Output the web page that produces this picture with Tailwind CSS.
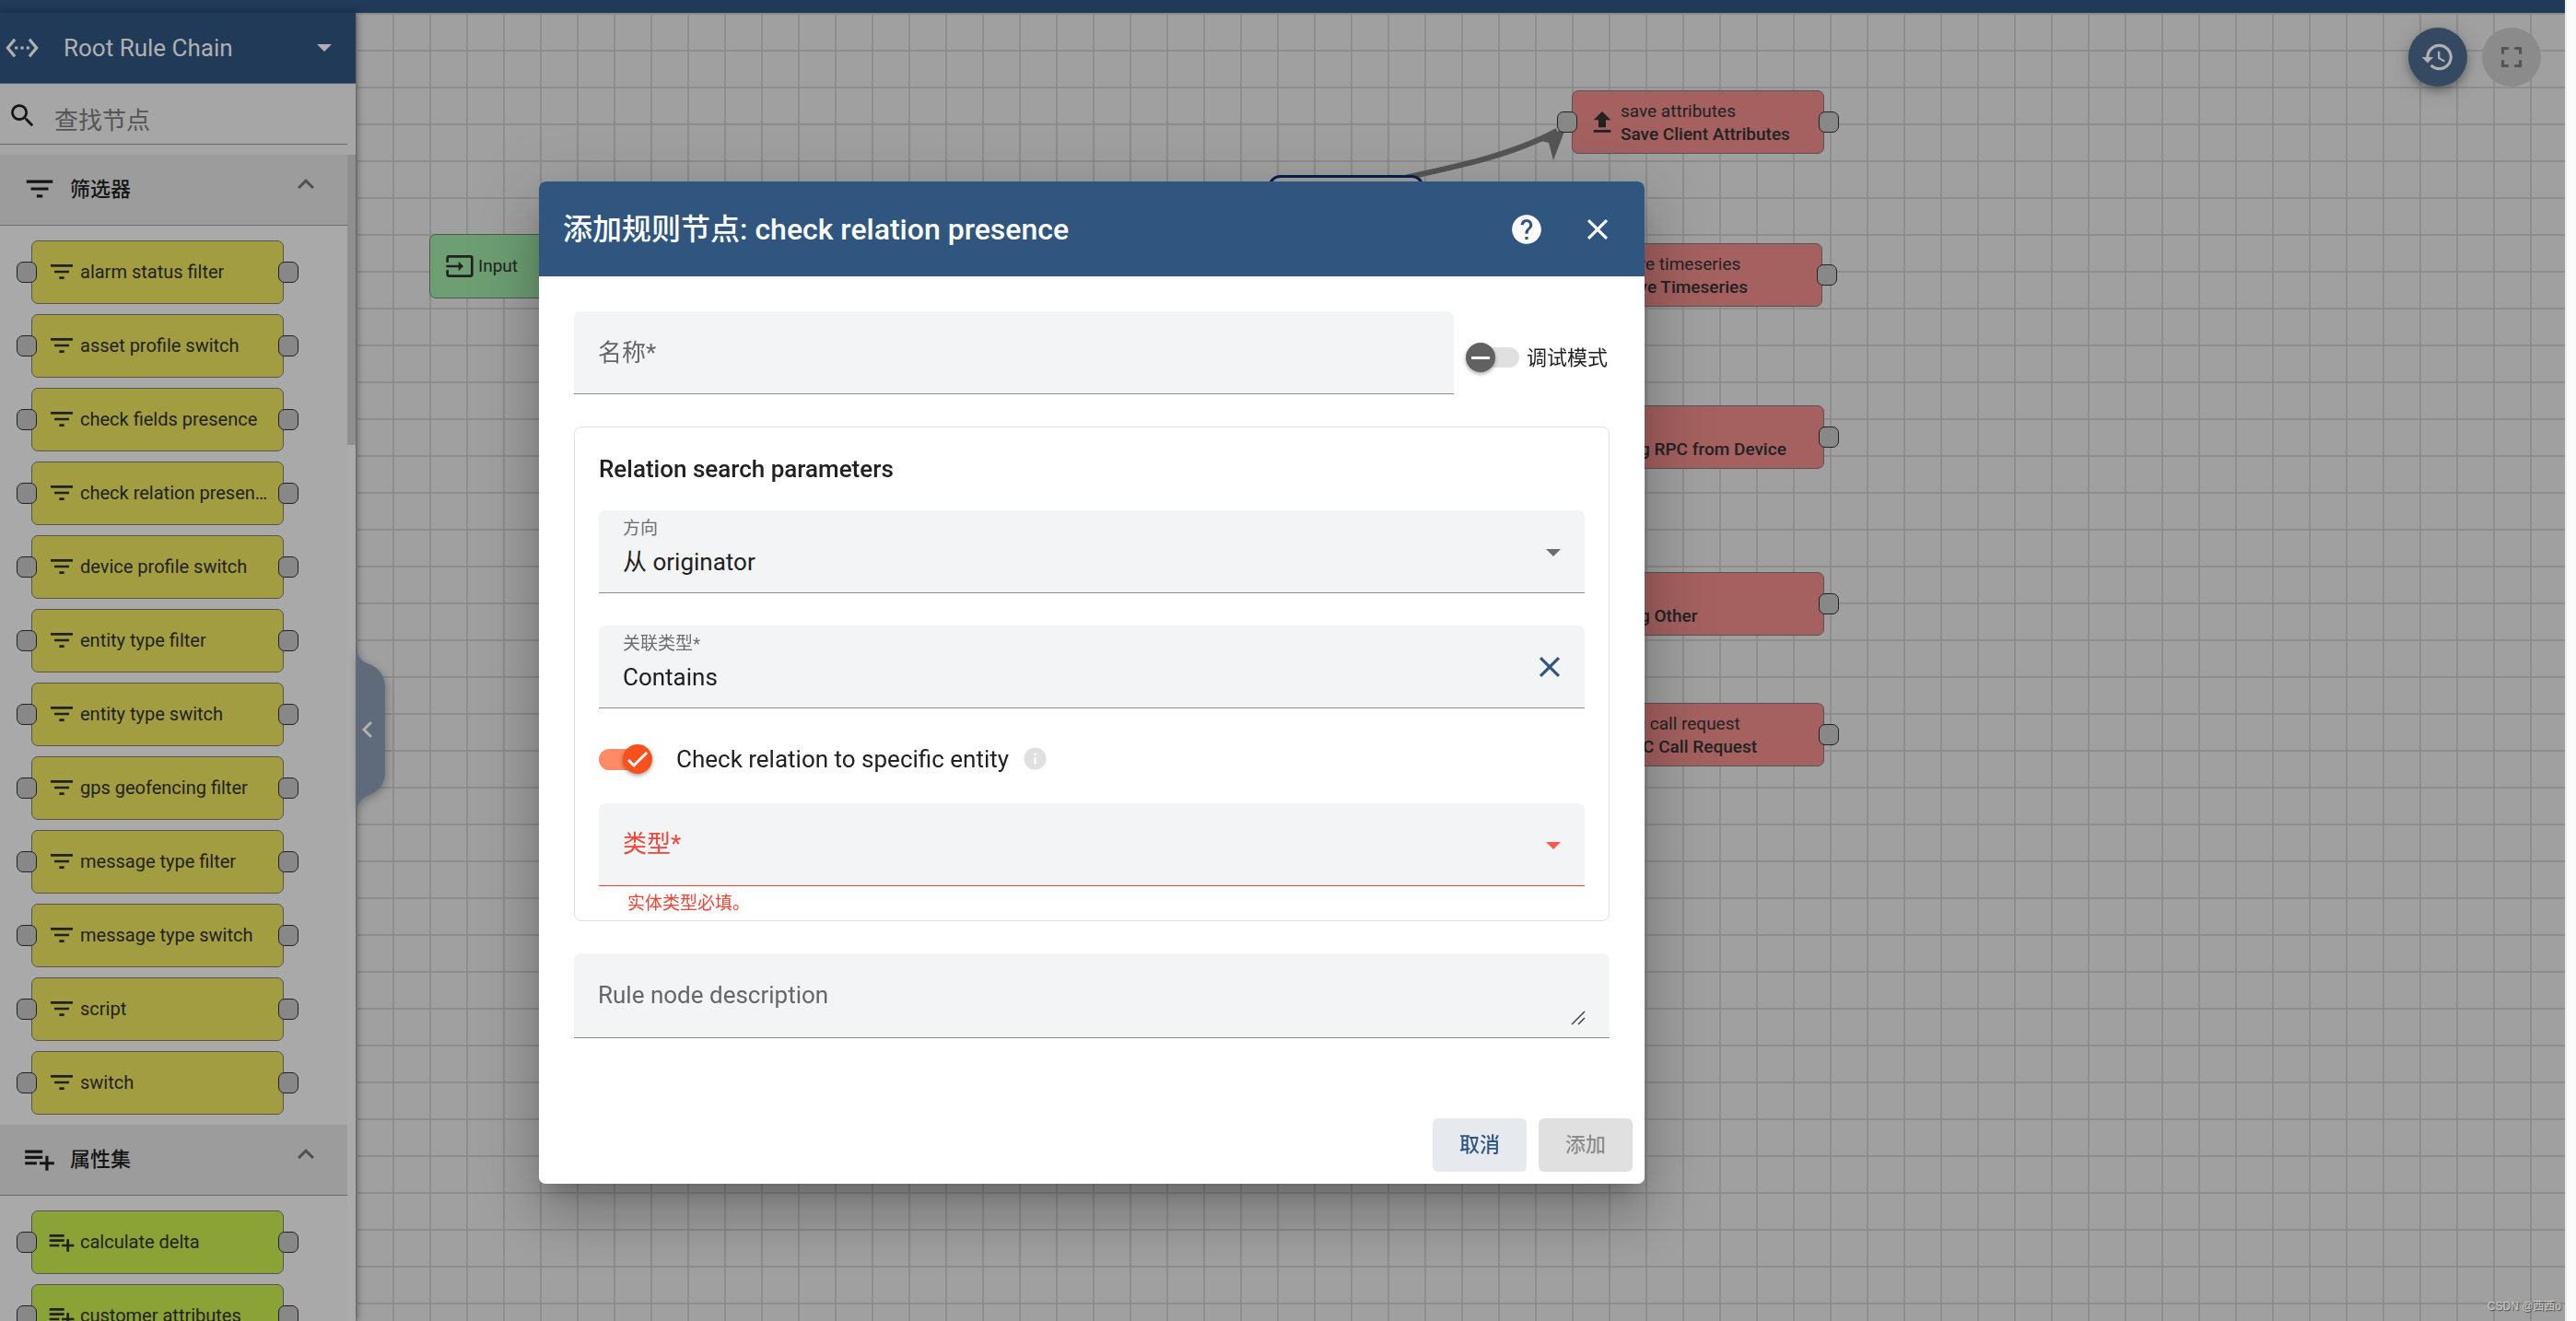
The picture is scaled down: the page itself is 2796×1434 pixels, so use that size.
<!DOCTYPE html>
<html lang="zh-CN">
<head>
    <meta charset="UTF-8">
    <meta name="viewport" content="width=device-width, initial-scale=1.0">
    <title>Root Rule Chain</title>
    <script src="https://cdn.jsdelivr.net/npm/@tailwindcss/browser@4"></script>
</head>
<body class="h-screen overflow-hidden bg-[#fafafa] pr-[10px] font-[Roboto,'Noto_Sans_CJK_SC',sans-serif] text-[#212121]">
    <!-- Icon set -->
    <svg class="hidden">
        <symbol id="i-chain" viewBox="0 0 24 24"><path d="M7.77 6.76L6.23 5.48.82 12l5.41 6.52 1.54-1.28L3.42 12l4.35-5.24zM7 13h2v-2H7v2zm10-2h-2v2h2v-2zm-6 2h2v-2h-2v2zm6.77-7.52l-1.54 1.28L20.58 12l-4.35 5.24 1.54 1.28L23.18 12l-5.41-6.52z"/></symbol>
        <symbol id="i-search" viewBox="0 0 24 24"><path d="M15.5 14h-.79l-.28-.27C15.41 12.59 16 11.11 16 9.5 16 5.91 13.09 3 9.5 3S3 5.91 3 9.5 5.91 16 9.5 16c1.61 0 3.09-.59 4.23-1.57l.27.28v.79l5 4.99L20.49 19l-4.99-5zm-6 0C7.01 14 5 11.99 5 9.5S7.01 5 9.5 5 14 7.01 14 9.5 11.99 14 9.5 14z"/></symbol>
        <symbol id="i-filter" viewBox="0 0 24 24"><path d="M10 18h4v-2h-4v2zM3 6v2h18V6H3zm3 7h12v-2H6v2z"/></symbol>
        <symbol id="i-playlist" viewBox="0 0 24 24"><path d="M14 10H2v2h12v-2zm0-4H2v2h12V6zm4 8v-4h-2v4h-4v2h4v4h2v-4h4v-2h-4zM2 16h8v-2H2v2z"/></symbol>
        <symbol id="i-up" viewBox="0 0 24 24"><path d="M12 8l-6 6 1.41 1.41L12 10.83l4.59 4.58L18 14z"/></symbol>
        <symbol id="i-input" viewBox="0 0 24 24"><path d="M21 3.01H3c-1.1 0-2 .9-2 2V9h2V4.99h18v14.03H3V15H1v4.01c0 1.1.9 1.98 2 1.98h18c1.1 0 2-.88 2-1.98v-14c0-1.11-.9-2-2-2zM11 16l4-4-4-4v3H1v2h10v3z"/></symbol>
        <symbol id="i-upload" viewBox="0 0 24 24"><path d="M5 20h14v-2H5v2zM5 10h4v6h6v-6h4l-7-7-7 7z"/></symbol>
        <symbol id="i-history" viewBox="0 0 24 24"><path d="M13 3c-4.97 0-9 4.03-9 9H1l3.89 3.89.07.14L9 12H6c0-3.87 3.13-7 7-7s7 3.13 7 7-3.13 7-7 7c-1.93 0-3.68-.79-4.94-2.06l-1.42 1.42C8.27 19.99 10.51 21 13 21c4.97 0 9-4.03 9-9s-4.03-9-9-9zm-1 5v5l4.28 2.54.72-1.21-3.5-2.08V8H12z"/></symbol>
        <symbol id="i-full" viewBox="0 0 24 24"><path d="M7 14H5v5h5v-2H7v-3zm-2-4h2V7h3V5H5v5zm12 7h-3v2h5v-5h-2v3zM14 5v2h3v3h2V5h-5z"/></symbol>
        <symbol id="i-help" viewBox="0 0 24 24"><path d="M12 2C6.48 2 2 6.48 2 12s4.48 10 10 10 10-4.48 10-10S17.52 2 12 2zm1 17h-2v-2h2v2zm2.07-7.75l-.9.92C13.45 12.9 13 13.5 13 15h-2v-.5c0-1.1.45-2.1 1.17-2.83l1.24-1.26c.37-.36.59-.86.59-1.41 0-1.1-.9-2-2-2s-2 .9-2 2H8c0-2.21 1.79-4 4-4s4 1.79 4 4c0 .88-.36 1.68-.93 2.25z"/></symbol>
        <symbol id="i-close" viewBox="0 0 24 24"><path d="M19 6.41L17.59 5 12 10.59 6.41 5 5 6.41 10.59 12 5 17.59 6.41 19 12 13.41 17.59 19 19 17.59 13.41 12z"/></symbol>
        <symbol id="i-info" viewBox="0 0 24 24"><path d="M12 2C6.48 2 2 6.48 2 12s4.48 10 10 10 10-4.48 10-10S17.52 2 12 2zm1 15h-2v-6h2v6zm0-8h-2V7h2v2z"/></symbol>
    </svg>

    <div class="flex h-full flex-col border-r-2 border-[#ebebeb]">
        <div class="h-[14px] shrink-0 bg-[#213a58]"></div>
        <div class="flex min-h-0 flex-1">
            <!-- Node library -->
            <aside class="relative z-10 flex w-[386px] shrink-0 flex-col bg-[#a6a6a6] shadow-[2px_0_8px_rgba(0,0,0,0.35)]">
                <button class="flex h-[77px] shrink-0 items-center border-b border-[#4e627c] bg-[#213a58] pr-[26px] pl-[5px] text-[#b0b0b0]">
                    <svg class="size-[38px] fill-current"><use href="#i-chain"/></svg>
                    <span class="ml-[26px] flex-1 text-left text-[26px]">Root Rule Chain</span>
                    <svg class="h-2 w-4 fill-current" viewBox="0 0 16 8"><path d="M0 0h16L8 8z"/></svg>
                </button>
                <div class="mr-[9px] flex h-[66px] shrink-0 items-center border-b border-[#666] pt-[4px] pl-[8px]">
                    <svg class="size-[33px] fill-[#151515]"><use href="#i-search"/></svg>
                    <input type="text" aria-label="查找节点" placeholder="查找节点" class="ml-[18px] min-w-0 flex-1 pt-[12px] text-[26px] placeholder:text-[#555] focus:outline-none">
                </div>
                <div class="mt-[11px] flex min-h-0 flex-1">
                    <div class="min-w-0 flex-1 overflow-hidden bg-[#a9a9a9]">
                        <section>
                            <button class="flex h-[77px] w-full items-center border-b border-[#6a6a6a] bg-[#9c9c9c] pr-[27px] pb-[2px] pl-[24px]">
                                <svg class="size-[38px] fill-[#151515]"><use href="#i-filter"/></svg>
                                <span class="ml-[14px] flex-1 text-left text-[22px] font-medium text-[#151515]">筛选器</span>
                                <svg class="mb-[10px] size-[36px] fill-[#505050]"><use href="#i-up"/></svg>
                            </button>
                            <div id="filterNodes" class="flex flex-col gap-[11px] pt-[16px] pb-[11px]"></div>
                        </section>
                        <section>
                            <button class="flex h-[77px] w-full items-center border-b border-[#6a6a6a] bg-[#9c9c9c] pr-[27px] pb-[2px] pl-[24px]">
                                <svg class="size-[38px] fill-[#151515]"><use href="#i-playlist"/></svg>
                                <span class="ml-[14px] flex-1 text-left text-[22px] font-medium text-[#151515]">属性集</span>
                                <svg class="mb-[10px] size-[36px] fill-[#505050]"><use href="#i-up"/></svg>
                            </button>
                            <div id="enrichmentNodes" class="flex flex-col gap-[11px] pt-[16px] pb-[11px]"></div>
                        </section>
                    </div>
                    <div class="w-[9px] bg-[#ababab]"><div class="h-[315px] bg-[#8f8f8f]"></div></div>
                </div>
                <!-- Collapse handle -->
                <button aria-label="Collapse" class="absolute top-[688px] left-full h-[180px] w-[32px]">
                    <svg class="h-full w-full drop-shadow-[2px_3px_4px_rgba(0,0,0,0.25)]" viewBox="0 0 32 180">
                        <path fill="#5f6b7a" d="M0 0c2 12 8 17 15 19 10 4 17 12 17 26v90c0 14-7 22-17 26-7 2-13 7-15 19z"/>
                        <path fill="none" stroke="#b0b0b0" stroke-width="3" d="M17 82l-8 8 8 8"/>
                    </svg>
                </button>
            </aside>

            <!-- Rule chain canvas -->
            <main id="canvas" class="relative min-w-0 flex-1 overflow-hidden bg-[#a0a0a0] bg-[linear-gradient(to_right,#8d8d8d_2px,transparent_2px),linear-gradient(to_bottom,#8d8d8d_2px,transparent_2px)] bg-[size:40px_40px]">
                <svg class="absolute top-0 left-0 h-[400px] w-[1400px]" viewBox="0 0 1400 400">
                    <path fill="none" stroke="#555" stroke-width="6" d="M1120 183C1200 166 1256 154 1304 128"/>
                    <path fill="#555" d="M1313 126l-35 11 17 4 5 19z"/>
                </svg>
                <div class="absolute top-[176px] left-[990px] h-[80px] w-[170px] rounded-[14px] border-3 border-[#00224e] bg-[#a0a0a0]"></div>
                <div class="absolute top-[16px] right-[26px] flex gap-4">
                    <button aria-label="Version control" class="flex size-[64px] items-center justify-center rounded-full bg-[#354962] shadow-[0_5px_10px_rgba(0,0,0,0.3),0_2px_28px_rgba(0,0,0,0.12)]">
                        <svg class="size-[38px] fill-[#b0b0b0]"><use href="#i-history"/></svg>
                    </button>
                    <button aria-label="Fullscreen" class="flex size-[64px] items-center justify-center rounded-full bg-[#8b8b8b]">
                        <svg class="size-[38px] fill-[#555]"><use href="#i-full"/></svg>
                    </button>
                </div>
                <span class="absolute right-[4px] bottom-[8px] font-['Liberation_Sans','Noto_Sans_CJK_SC',sans-serif] text-[12px] leading-4 text-[#d0d0d0] [text-shadow:1px_1px_1px_#444]">CSDN @西西o</span>
            </main>
        </div>
    </div>

    <!-- Add rule node dialog -->
    <div class="fixed inset-0 z-20 flex items-start pt-[197px] pl-[585px]">
        <div role="dialog" aria-labelledby="dialogTitle" class="w-[1200px] overflow-hidden rounded-[7px] bg-white shadow-[0_18px_24px_-11px_rgba(0,0,0,0.2),0_38px_61px_5px_rgba(0,0,0,0.14),0_14px_74px_13px_rgba(0,0,0,0.12)]">
            <div class="flex h-[103px] items-center bg-[#305680] pr-[32px] pl-[26px] text-white">
                <h2 id="dialogTitle" class="flex-1 text-[32px] font-medium">添加规则节点: check relation presence</h2>
                <button aria-label="Help"><svg class="size-[38px] fill-current"><use href="#i-help"/></svg></button>
                <button aria-label="Close" class="ml-[39px]"><svg class="size-[38px] fill-current"><use href="#i-close"/></svg></button>
            </div>

            <form>
                <div class="px-[38px] pt-[38px]">
                    <div class="flex items-center">
                        <input type="text" aria-label="名称" placeholder="名称*" class="h-[90px] min-w-0 flex-1 rounded-t-[7px] border-b border-[#8b8c8e] bg-[#f3f4f6] px-[26px] text-[26px] placeholder:text-[#666] focus:outline-none">
                        <label class="ml-[13px] flex items-center pt-[10px] pr-[2px] text-[22px]">
                            <span class="relative flex h-[32px] w-[58px] items-center">
                                <input type="checkbox" class="ml-[6px] h-[22px] w-[52px] appearance-none rounded-full bg-[#e0e0e0]">
                                <span class="absolute left-0 flex size-[32px] items-center justify-center rounded-full bg-[#616161] shadow-[0_2px_4px_rgba(0,0,0,0.35)]">
                                    <span class="h-[3px] w-[20px] bg-white"></span>
                                </span>
                            </span>
                            <span class="ml-[8px]">调试模式</span>
                        </label>
                    </div>

                    <div class="mt-[35px] rounded-[8px] border border-[#e0e0e0] px-[26px] pb-[4px]">
                        <h3 class="pt-[26px] text-[26px] leading-[38px] font-medium">Relation search parameters</h3>

                        <div class="relative mt-[26px] h-[90px] rounded-t-[7px] border-b border-[#8b8c8e] bg-[#f3f4f6] px-[26px] pt-[8px]">
                            <label for="direction" class="block text-[19px] leading-6 text-[#6c6d6e]">方向</label>
                            <select id="direction" class="mt-[4px] block h-[40px] w-full appearance-none text-[26px] focus:outline-none">
                                <option>从 originator</option>
                            </select>
                            <svg class="pointer-events-none absolute top-[42px] right-[26px] h-2 w-4 fill-[#6c6d6e]" viewBox="0 0 16 8"><path d="M0 0h16L8 8z"/></svg>
                        </div>

                        <div class="mt-[35px] flex h-[90px] items-center rounded-t-[7px] border-b border-[#8b8c8e] bg-[#f3f4f6] pr-[19px] pl-[26px]">
                            <div class="flex-1 self-start pt-[8px]">
                                <label for="relationType" class="block text-[19px] leading-6 text-[#6c6d6e]">关联类型*</label>
                                <input type="text" id="relationType" value="Contains" class="mt-[4px] block h-[40px] w-full text-[26px] focus:outline-none">
                            </div>
                            <button type="button" aria-label="Clear"><svg class="size-[38px] fill-[#305680]"><use href="#i-close"/></svg></button>
                        </div>

                        <div class="mt-[36px] flex h-[38px] items-center">
                            <label class="flex items-center text-[26px]">
                                <span class="relative flex h-[32px] w-[58px] items-center">
                                    <input type="checkbox" checked class="h-[23px] w-[52px] appearance-none rounded-full bg-[#ff8a65]">
                                    <span class="absolute right-0 flex size-[32px] items-center justify-center rounded-full bg-[#f9501e] shadow-[0_2px_4px_rgba(0,0,0,0.35)]">
                                        <svg class="size-[24px]" viewBox="0 0 24 24" fill="none" stroke="#fff" stroke-width="3"><path d="M2 13l6 6L22 5"/></svg>
                                    </span>
                                </span>
                                <span class="ml-[26px]">Check relation to specific entity</span>
                            </label>
                            <svg class="mb-[2px] ml-[14px] size-[29px] fill-[#e0e0e0]"><use href="#i-info"/></svg>
                        </div>

                        <div class="relative mt-[29px] h-[90px] rounded-t-[7px] border-b border-[#f44336] bg-[#f3f4f6]">
                            <select aria-label="类型" class="h-full w-full appearance-none px-[26px] text-[26px] text-[#f44336] focus:outline-none">
                                <option>类型*</option>
                            </select>
                            <svg class="pointer-events-none absolute top-[42px] right-[26px] h-2 w-4 fill-[#f9594d]" viewBox="0 0 16 8"><path d="M0 0h16L8 8z"/></svg>
                        </div>
                        <p class="pt-[5px] pl-[31px] text-[19px] leading-[28px] text-[#f44336]">实体类型必填。</p>
                    </div>

                    <div class="relative mt-[35px]">
                        <textarea aria-label="Rule node description" placeholder="Rule node description" class="block h-[92px] w-full resize-none rounded-t-[7px] border-b border-[#8b8c8e] bg-[#f3f4f6] px-[26px] pt-[26px] text-[26px] leading-[38px] placeholder:text-[#666] focus:outline-none"></textarea>
                        <svg class="pointer-events-none absolute right-[26px] bottom-[14px] size-[16px]" viewBox="0 0 16 16" stroke="#444" stroke-width="1.5"><path d="M1 15L15 1M8 15l7-7"/></svg>
                    </div>
                </div>

                <div class="mt-[87px] flex justify-end gap-[13px] px-[13px] pb-[13px] text-[22px] font-medium">
                    <button type="button" class="h-[58px] w-[102px] rounded-[6px] bg-[#e6eaef] pb-[2px] text-[#305680]">取消</button>
                    <button type="submit" disabled class="h-[58px] w-[102px] rounded-[6px] bg-[#e0e0e0] pb-[2px] text-[#8c8c8c]">添加</button>
                </div>
            </form>
        </div>
    </div>

    <script>
        const filters = ['alarm status filter', 'asset profile switch', 'check fields presence', 'check relation presen…',
            'device profile switch', 'entity type filter', 'entity type switch', 'gps geofencing filter',
            'message type filter', 'message type switch', 'script', 'switch'];
        const enrichment = ['calculate delta', 'customer attributes'];

        const leftPort = '<span class="absolute top-[22px] -left-[17px] h-[23px] w-[22px] rounded-[7px] border border-[#222] bg-[#888]"></span>';
        const rightPort = '<span class="absolute top-[22px] -right-[17px] h-[23px] w-[22px] rounded-[7px] border border-[#222] bg-[#888]"></span>';

        // Library entries
        function libraryNode(name, icon, color) {
            return `<div class="relative ml-[34px] flex h-[69px] w-[274px] items-center rounded-[7px] border border-[#555] pb-[2px] pl-[16px] ${color}">
                ${leftPort}<svg class="size-[32px] shrink-0 fill-[#222]"><use href="#${icon}"/></svg>
                <span class="ml-[4px] truncate text-[20px] text-[#222]">${name}</span>${rightPort}
            </div>`;
        }
        document.getElementById('filterNodes').innerHTML = filters.map(n => libraryNode(n, 'i-filter', 'bg-[#a39d42]')).join('');
        document.getElementById('enrichmentNodes').innerHTML = enrichment.map(n => libraryNode(n, 'i-playlist', 'bg-[#8aa236]')).join('');

        // Nodes placed on the canvas, coordinates relative to it
        const nodes = [
            { x: 1320, y: 84, type: 'save attributes', name: 'Save Client Attributes' },
            { x: 1318, y: 250, type: 'save timeseries', name: 'Save Timeseries' },
            { x: 1320, y: 426, type: 'log', name: 'Log RPC from Device' },
            { x: 1320, y: 607, type: 'log', name: 'Log Other' },
            { x: 1320, y: 749, type: 'rpc call request', name: 'RPC Call Request' }
        ];
        const canvas = document.getElementById('canvas');
        canvas.insertAdjacentHTML('beforeend', nodes.map(n => `
            <div class="absolute flex h-[69px] w-[274px] items-center rounded-[7px] border border-[#555] bg-[#a46160] pl-[16px] text-[#222]" style="left:${n.x}px;top:${n.y}px">
                ${leftPort}<svg class="size-[32px] shrink-0 fill-[#222]"><use href="#i-upload"/></svg>
                <div class="ml-[4px] text-[19px] leading-[25px]"><div>${n.type}</div><div class="font-medium">${n.name}</div></div>${rightPort}
            </div>`).join(''));
        canvas.insertAdjacentHTML('beforeend', `
            <div class="absolute flex h-[70px] w-[274px] items-center rounded-[7px] border border-[#555] bg-[#6d9f73] pl-[16px] text-[#222]" style="left:80px;top:240px">
                <svg class="size-[32px] fill-[#222]"><use href="#i-input"/></svg>
                <span class="ml-[4px] text-[19px]">Input</span>
            </div>`);
    </script>
</body>
</html>
